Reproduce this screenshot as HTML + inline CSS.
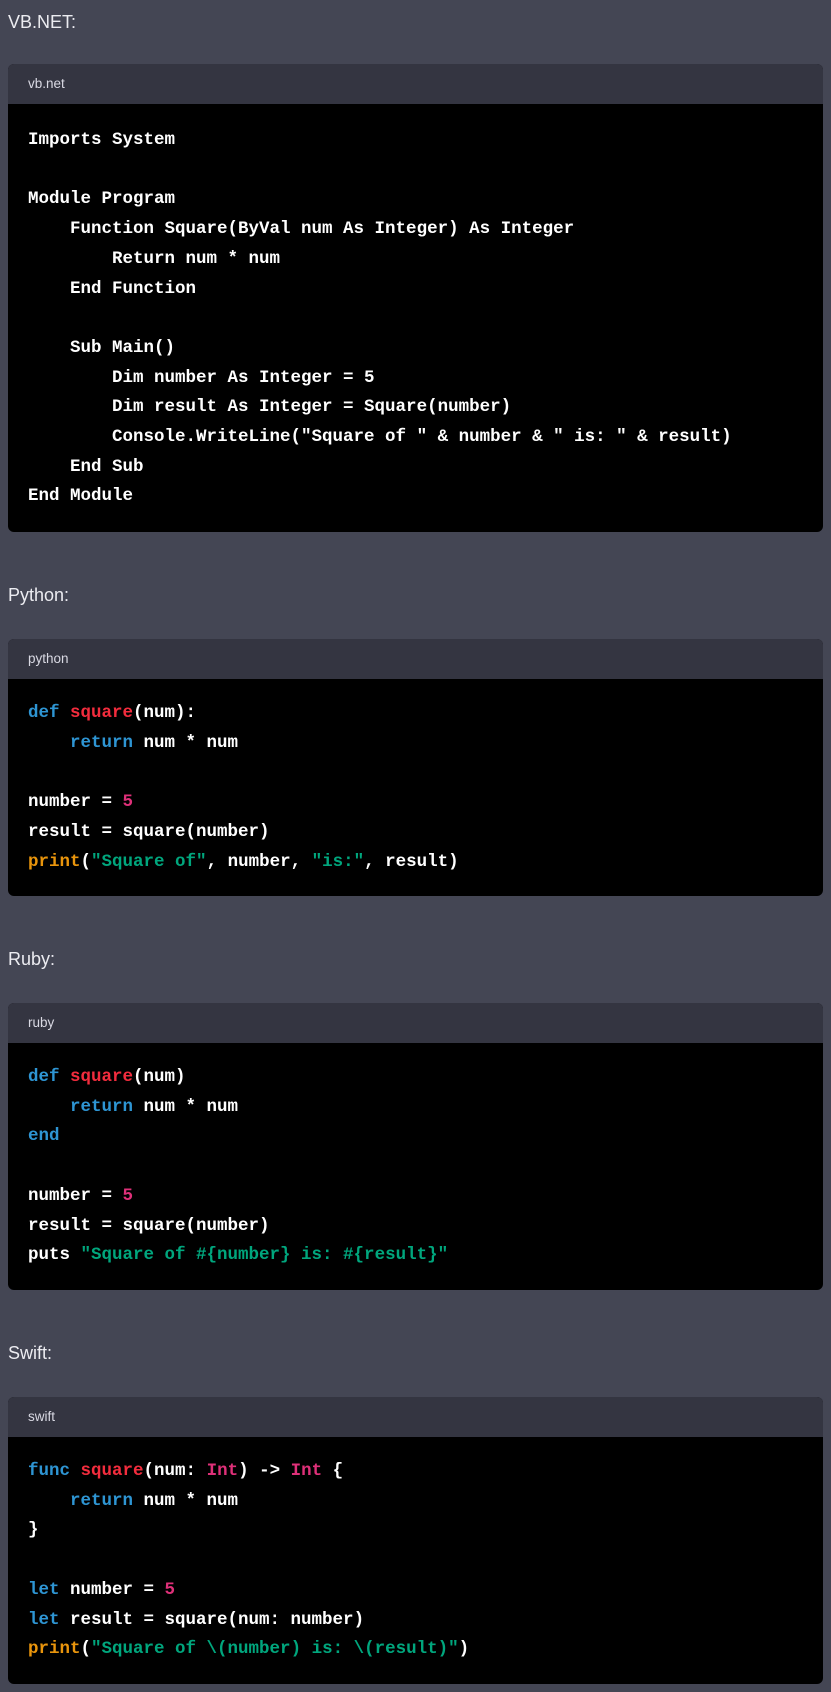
<!DOCTYPE html>
<html><head><meta charset="utf-8"><style>
body{margin:0;width:831px;height:1692px;background:#444654;position:relative;overflow:hidden;font-family:"Liberation Sans",sans-serif}
.lab{position:absolute;left:8px;font-size:18px;color:#ececf1;line-height:24px}
.blk{position:absolute;left:8px;width:815px;border-radius:6px;overflow:hidden;background:#000}
.hd{height:40px;background:#343541;color:#d9d9e3;font-size:13.5px;line-height:40px;padding-left:20px}
pre{margin:0;padding:20px 20px 20px 20px;font-family:"Liberation Mono",monospace;font-weight:bold;font-size:17.5px;line-height:29.7px;color:#fff}
.k{color:#2e95d3}.f{color:#f22c3d}.n{color:#df3079}.s{color:#00a67d}.p{color:#e9950c}
</style></head><body>
<div class="lab" style="top:10px">VB.NET:</div>
<div class="blk" style="top:64px;height:468px"><div class="hd">vb.net</div><pre style="padding-top:22px">Imports System

Module Program
    Function Square(ByVal num As Integer) As Integer
        Return num * num
    End Function

    Sub Main()
        Dim number As Integer = 5
        Dim result As Integer = Square(number)
        Console.WriteLine("Square of " &amp; number &amp; " is: " &amp; result)
    End Sub
End Module</pre></div>

<div class="lab" style="top:583px">Python:</div>
<div class="blk" style="top:639px;height:257px"><div class="hd">python</div><pre><span class="k">def</span> <span class="f">square</span>(num):
    <span class="k">return</span> num * num

number = <span class="n">5</span>
result = square(number)
<span class="p">print</span>(<span class="s">"Square of"</span>, number, <span class="s">"is:"</span>, result)</pre></div>

<div class="lab" style="top:947px">Ruby:</div>
<div class="blk" style="top:1003px;height:287px"><div class="hd">ruby</div><pre><span class="k">def</span> <span class="f">square</span>(num)
    <span class="k">return</span> num * num
<span class="k">end</span>

number = <span class="n">5</span>
result = square(number)
puts <span class="s">"Square of #{number} is: #{result}"</span></pre></div>

<div class="lab" style="top:1341px">Swift:</div>
<div class="blk" style="top:1397px;height:287px"><div class="hd">swift</div><pre><span class="k">func</span> <span class="f">square</span>(num: <span class="n">Int</span>) -&gt; <span class="n">Int</span> {
    <span class="k">return</span> num * num
}

<span class="k">let</span> number = <span class="n">5</span>
<span class="k">let</span> result = square(num: number)
<span class="p">print</span>(<span class="s">"Square of \(number) is: \(result)"</span>)</pre></div>
</body></html>
